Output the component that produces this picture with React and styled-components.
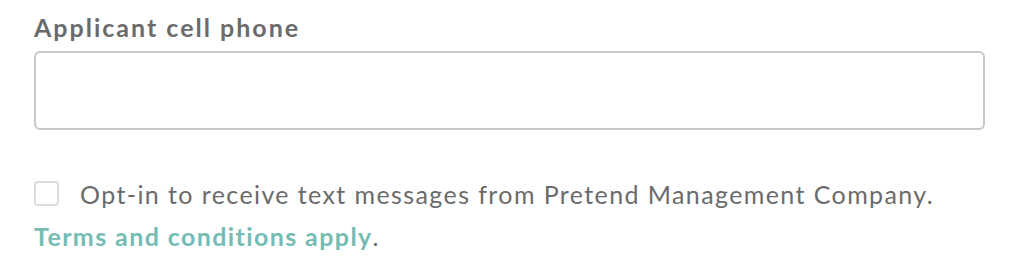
import React from "react";
import styled, { createGlobalStyle } from "styled-components";

const Global = createGlobalStyle`
  html, body { margin: 0; padding: 0; background: #fff; }
  body { font-family: Lato, "Noto Sans", sans-serif; }
`;

const Form = styled.div`
  padding: 12px 33px 0 34px;
  display: flex;
  flex-direction: column;
`;

const Label = styled.label`
  font-size: 25px;
  font-weight: 700;
  color: #6b6b6b;
  letter-spacing: 2px;
  line-height: 30px;
  margin-bottom: 9px;
`;

const Input = styled.input`
  box-sizing: border-box;
  width: 951px;
  height: 79px;
  border: 2px solid #c8c8c8;
  border-radius: 6px;
  background: #fff;
  outline: none;
  font: inherit;
  font-size: 24px;
  padding: 0 16px;
`;

const OptRow = styled.div`
  margin-top: 43px;
  font-size: 25px;
  line-height: 42px;
  letter-spacing: 1.4px;
  color: #6b6b6b;
`;

const Box = styled.span`
  display: inline-block;
  box-sizing: border-box;
  width: 25px;
  height: 25px;
  border: 2px solid #dcdcdc;
  border-radius: 4px;
  vertical-align: -2px;
  margin-right: 21px;
`;

const Terms = styled.a`
  color: #74bcb4;
  font-weight: 700;
  text-decoration: none;
`;

export default function App() {
  return (
    <>
      <Global />
      <Form>
        <Label>Applicant cell phone</Label>
        <Input type="tel" />
        <OptRow>
          <Box />
          Opt-in to receive text messages from Pretend Management Company.
          <br />
          <Terms href="#">Terms and conditions apply</Terms>.
        </OptRow>
      </Form>
    </>
  );
}
